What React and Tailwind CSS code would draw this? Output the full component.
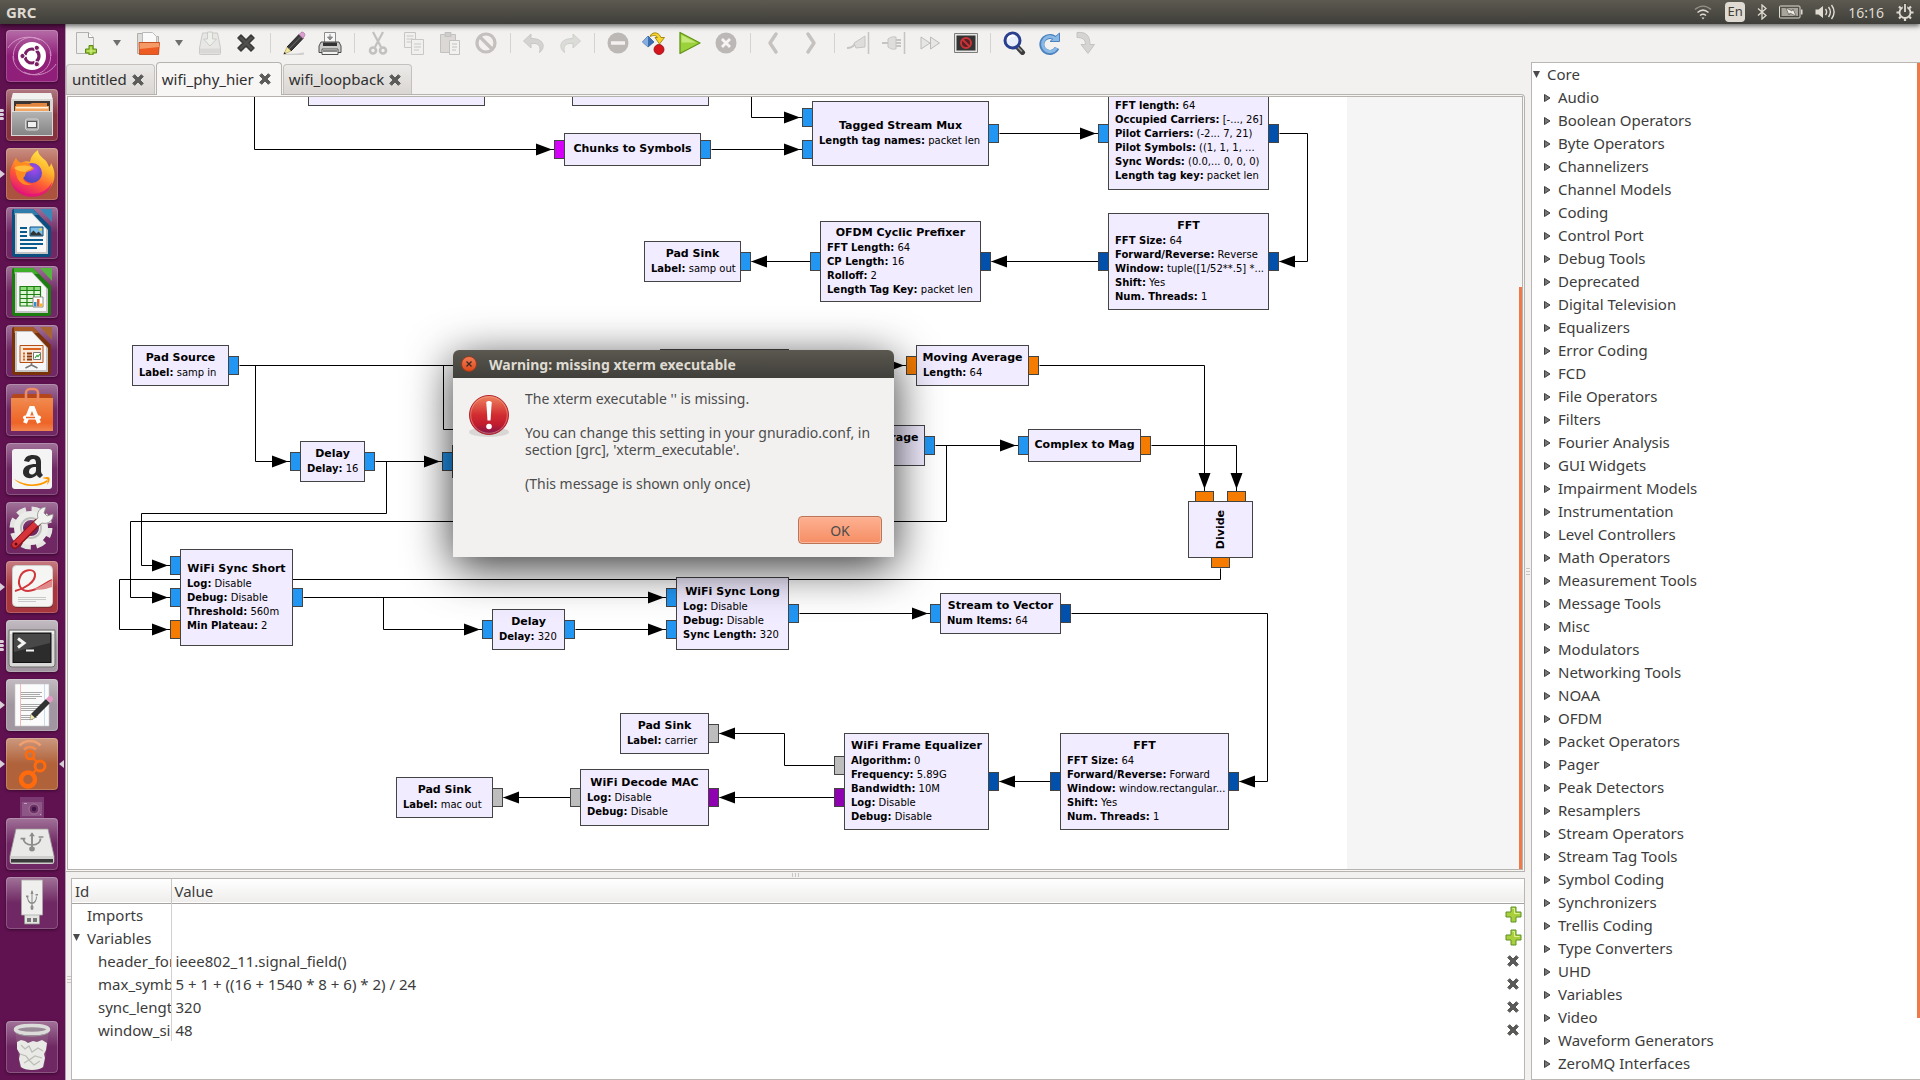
import React from "react";

const CATEGORIES = [
  "Audio",
  "Boolean Operators",
  "Byte Operators",
  "Channelizers",
  "Channel Models",
  "Coding",
  "Control Port",
  "Debug Tools",
  "Deprecated",
  "Digital Television",
  "Equalizers",
  "Error Coding",
  "FCD",
  "File Operators",
  "Filters",
  "Fourier Analysis",
  "GUI Widgets",
  "Impairment Models",
  "Instrumentation",
  "Level Controllers",
  "Math Operators",
  "Measurement Tools",
  "Message Tools",
  "Misc",
  "Modulators",
  "Networking Tools",
  "NOAA",
  "OFDM",
  "Packet Operators",
  "Pager",
  "Peak Detectors",
  "Resamplers",
  "Stream Operators",
  "Stream Tag Tools",
  "Symbol Coding",
  "Synchronizers",
  "Trellis Coding",
  "Type Converters",
  "UHD",
  "Variables",
  "Video",
  "Waveform Generators",
  "ZeroMQ Interfaces",
];

const VARIABLES = [
  { id: "Imports", value: "", kind: "group" },
  { id: "Variables", value: "", kind: "group", open: true },
  { id: "header_formatter", value: "ieee802_11.signal_field()" },
  { id: "max_symbols", value: "5 + 1 + ((16 + 1540 * 8 + 6) * 2) / 24" },
  { id: "sync_length", value: "320" },
  { id: "window_size", value: "48" },
];

const PORT = {
  complex: "bg-[#2196f3]",
  vector: "bg-[#0050ac]",
  float: "bg-[#f57c00]",
  byte: "bg-[#d500f9]",
  bytes: "bg-[#8e00b0]",
  message: "bg-[#bdbdbd]",
};

// box: x, y, width, height on the flow graph surface
const BLOCKS = [
  { box: [308, 73, 177, 33] },
  { box: [572, 73, 137, 33] },
  { box: [564, 133, 137, 33], title: "Chunks to Symbols" },
  { box: [812, 101, 177, 65], title: "Tagged Stream Mux", params: [["Length tag names", "packet len"]] },
  {
    box: [1108, 91, 161, 99],
    params: [
      ["FFT length", "64"],
      ["Occupied Carriers", "[-..., 26]"],
      ["Pilot Carriers", "(-2... 7, 21)"],
      ["Pilot Symbols", "((1, 1, 1, ..."],
      ["Sync Words", "(0.0,... 0, 0, 0)"],
      ["Length tag key", "packet len"],
    ],
  },
  {
    box: [1108, 213, 161, 97],
    title: "FFT",
    params: [
      ["FFT Size", "64"],
      ["Forward/Reverse", "Reverse"],
      ["Window", "tuple([1/52**.5] *..."],
      ["Shift", "Yes"],
      ["Num. Threads", "1"],
    ],
  },
  {
    box: [820, 221, 161, 81],
    title: "OFDM Cyclic Prefixer",
    params: [
      ["FFT Length", "64"],
      ["CP Length", "16"],
      ["Rolloff", "2"],
      ["Length Tag Key", "packet len"],
    ],
  },
  { box: [644, 241, 97, 41], title: "Pad Sink", params: [["Label", "samp out"]] },
  { box: [132, 345, 97, 41], title: "Pad Source", params: [["Label", "samp in"]] },
  { box: [300, 441, 65, 41], title: "Delay", params: [["Delay", "16"]] },
  { box: [452, 445, 81, 33] },
  { box: [660, 349, 129, 33] },
  { box: [916, 345, 113, 41], title: "Moving Average", params: [["Length", "64"]] },
  { box: [812, 425, 113, 41], title: "Moving Average", params: [[]] },
  { box: [1028, 429, 113, 33], title: "Complex to Mag" },
  { box: [1188, 501, 65, 57], title: "Divide", vertical: true },
  {
    box: [180, 549, 113, 97],
    title: "WiFi Sync Short",
    params: [
      ["Log", "Disable"],
      ["Debug", "Disable"],
      ["Threshold", "560m"],
      ["Min Plateau", "2"],
    ],
  },
  { box: [492, 609, 73, 41], title: "Delay", params: [["Delay", "320"]] },
  {
    box: [676, 577, 113, 73],
    title: "WiFi Sync Long",
    params: [
      ["Log", "Disable"],
      ["Debug", "Disable"],
      ["Sync Length", "320"],
    ],
  },
  { box: [940, 593, 121, 41], title: "Stream to Vector", params: [["Num Items", "64"]] },
  { box: [620, 713, 89, 41], title: "Pad Sink", params: [["Label", "carrier"]] },
  {
    box: [580, 769, 129, 57],
    title: "WiFi Decode MAC",
    params: [
      ["Log", "Disable"],
      ["Debug", "Disable"],
    ],
  },
  { box: [396, 777, 97, 41], title: "Pad Sink", params: [["Label", "mac out"]] },
  {
    box: [844, 733, 145, 97],
    title: "WiFi Frame Equalizer",
    params: [
      ["Algorithm", "0"],
      ["Frequency", "5.89G"],
      ["Bandwidth", "10M"],
      ["Log", "Disable"],
      ["Debug", "Disable"],
    ],
  },
  {
    box: [1060, 733, 169, 97],
    title: "FFT",
    params: [
      ["FFT Size", "64"],
      ["Forward/Reverse", "Forward"],
      ["Window", "window.rectangular..."],
      ["Shift", "Yes"],
      ["Num. Threads", "1"],
    ],
  },
];

const PORTS = [
  [554, 140, "byte"],
  [700, 140, "complex"],
  [802, 108, "complex"],
  [802, 140, "complex"],
  [988, 124, "complex"],
  [1098, 124, "complex"],
  [1268, 124, "vector"],
  [1098, 252, "vector"],
  [1268, 252, "vector"],
  [810, 252, "complex"],
  [980, 252, "vector"],
  [740, 252, "complex"],
  [228, 356, "complex"],
  [290, 452, "complex"],
  [364, 452, "complex"],
  [442, 452, "complex"],
  [906, 356, "float"],
  [1028, 356, "float"],
  [924, 436, "complex"],
  [1018, 436, "complex"],
  [1140, 436, "float"],
  [170, 556, "complex"],
  [170, 588, "complex"],
  [170, 620, "float"],
  [292, 588, "complex"],
  [482, 620, "complex"],
  [564, 620, "complex"],
  [666, 588, "complex"],
  [666, 620, "complex"],
  [788, 604, "complex"],
  [930, 604, "complex"],
  [1060, 604, "vector"],
  [708, 724, "message"],
  [570, 788, "message"],
  [708, 788, "bytes"],
  [492, 788, "message"],
  [834, 756, "message"],
  [834, 788, "bytes"],
  [988, 772, "vector"],
  [1050, 772, "vector"],
  [1228, 772, "vector"],
];

const TURNED_PORTS = [
  [1195, 491],
  [1227, 491],
  [1211, 557],
];

const WIRES = [
  [[254, 60], [254, 149], [554, 149]],
  [[751, 60], [751, 117], [802, 117]],
  [[711, 149], [802, 149]],
  [[999, 133], [1098, 133]],
  [[1279, 133], [1307, 133], [1307, 261], [1279, 261]],
  [[1098, 261], [991, 261]],
  [[810, 261], [751, 261]],
  [[239, 365], [906, 365]],
  [[255, 365], [255, 461], [290, 461]],
  [[443, 365], [443, 429], [560, 429]],
  [[375, 461], [442, 461]],
  [[386, 461], [386, 513], [141, 513], [141, 565], [170, 565]],
  [[935, 445], [1018, 445]],
  [[946, 445], [946, 521], [130, 521], [130, 597], [170, 597]],
  [[1039, 365], [1204, 365], [1204, 491]],
  [[1151, 445], [1236, 445], [1236, 491]],
  [[1220, 568], [1220, 579], [119, 579], [119, 629], [170, 629]],
  [[303, 597], [666, 597]],
  [[383, 597], [383, 629], [482, 629]],
  [[575, 629], [666, 629]],
  [[799, 613], [930, 613]],
  [[1071, 613], [1267, 613], [1267, 781], [1239, 781]],
  [[1050, 781], [999, 781]],
  [[834, 765], [784, 765], [784, 733], [719, 733]],
  [[834, 797], [719, 797]],
  [[570, 797], [503, 797]],
];

function arrowPoints(wire) {
  const [px, py] = wire[wire.length - 2];
  const [ex, ey] = wire[wire.length - 1];
  const dx = Math.sign(ex - px);
  const dy = Math.sign(ey - py);
  const gap = dx < 0 ? 0 : 2;
  const x = ex + (dy ? 0.5 : 0) - dx * gap;
  const y = ey + (dx ? 0.5 : 0) - dy * gap;
  const bx = x - dx * 16;
  const by = y - dy * 16;
  return `${x},${y} ${bx - dy * 6},${by - dx * 6} ${bx + dy * 6},${by + dx * 6}`;
}

function Wires() {
  return (
    <svg className="absolute left-0 top-0" width="1347" height="900" fill="none">
      {WIRES.map((wire, i) => (
        <g key={i}>
          <polyline points={wire.map(([x, y]) => `${x + 0.5},${y + 0.5}`).join(" ")} stroke="#000" />
          <polygon points={arrowPoints(wire)} fill="#000" />
        </g>
      ))}
    </svg>
  );
}

function Block({ box, title, params = [], vertical }) {
  const [left, top, width, height] = box;
  return (
    <div
      className="absolute flex flex-col justify-center border border-[#444] bg-[#f1ecff] px-1.5 font-['DejaVu_Sans'] text-black"
      style={{ left, top, width, height }}
    >
      {title && (
        <div
          className={
            vertical
              ? "rotate-180 self-center text-[11px] leading-[13px] font-bold whitespace-nowrap [writing-mode:vertical-rl]"
              : "self-center pb-0.5 text-[11px] leading-[13px] font-bold whitespace-nowrap"
          }
        >
          {title}
        </div>
      )}
      {params.map(([name, value], i) => (
        <div key={i} className="min-h-[14px] text-[10px] leading-[14px] whitespace-nowrap">
          {name && (
            <>
              <b>{name}:</b> {value}
            </>
          )}
        </div>
      ))}
    </div>
  );
}

/* ---------- launcher ---------- */

function UbuntuIcon() {
  return (
    <svg viewBox="0 0 52 52" className="size-full">
      <g fill="none" stroke="#e9b9dc" strokeWidth="1" opacity=".7">
        <path d="M8 30A18 18 0 0 1 30 8c9 2 15 9 15 18" />
        <path d="M2 18C8 8 22 4 34 10M50 34c-6 10-20 14-32 8M44 22a18 18 0 0 1-22 22C13 42 7 35 7 26" />
      </g>
      <circle cx="26" cy="26" r="14" fill="#fff" />
      <circle cx="26" cy="26" r="7" fill="none" stroke="#7a1f66" strokeWidth="3.2" strokeDasharray="13 1.7" strokeDashoffset="-8" />
      <g fill="#7a1f66" stroke="#fff" strokeWidth="1">
        <circle cx="16.5" cy="26" r="2.6" />
        <circle cx="30.8" cy="17.8" r="2.6" />
        <circle cx="30.8" cy="34.2" r="2.6" />
      </g>
    </svg>
  );
}

function FilesIcon() {
  return (
    <svg viewBox="0 0 52 52" className="size-full">
      <defs>
        <linearGradient id="cab" x1="0" y1="0" x2="0" y2="1">
          <stop offset="0" stopColor="#b5b5b5" />
          <stop offset="1" stopColor="#858585" />
        </linearGradient>
      </defs>
      <path d="M7 4h38l2 7v36H5V11z" fill="#d7d7d5" />
      <path d="M7 4h38l1.5 6h-41z" fill="#f1f1ef" />
      <path d="M8 12h36v10H8z" fill="#3b3634" />
      <path d="M10 15h14l2-1h15v8H10z" fill="#e08640" />
      <path d="M9 17h34v6H9z" fill="#f3a55f" />
      <path d="M10 18h32v1.500H10z" fill="#fff3e2" />
      <path d="M6 22h40v24H6z" fill="url(#cab)" />
      <path d="M6 22h40v1H6z" fill="#dedede" />
      <rect x="19.500" y="30" width="13" height="11" rx="2" fill="#a5a5a5" stroke="#d5d5d5" />
      <rect x="21.500" y="32.500" width="9" height="6" fill="#f1f1f1" stroke="#5a5a5a" />
    </svg>
  );
}

function FirefoxIcon() {
  return (
    <svg viewBox="0 0 52 52" className="size-full">
      <defs>
        <linearGradient id="fx" x1=".8" y1="0" x2=".3" y2="1">
          <stop offset="0" stopColor="#fff04f" />
          <stop offset=".35" stopColor="#ffb52e" />
          <stop offset=".65" stopColor="#ff5a36" />
          <stop offset="1" stopColor="#e3117b" />
        </linearGradient>
        <radialGradient id="fxg" cx=".6" cy=".3" r=".8">
          <stop offset="0" stopColor="#a44bf0" />
          <stop offset="1" stopColor="#3f46b8" />
        </radialGradient>
      </defs>
      <path
        d="M10 10c1 3 3 4 5 5 3-2 7-2 9-1 1-6 4-9 8-12 0 5 4 7 7 10 2 2 3 4 4 7 1-1 2-2 2-4 4 7 5 15 1 22-4 7-11 11-19 11C14 48 4 39 4 26c0-6 3-11 6-16z"
        fill="url(#fx)"
      />
      <path d="M5 33c4 9 12 13 21 13s16-4 20-12c-1 9-10 15-20 15S6 43 5 33z" fill="#e3117b" opacity=".75" />
      <circle cx="26" cy="25" r="10" fill="url(#fxg)" />
      <path d="M10 10c1 3 3 4 5 5 5-2 8 0 10 3l3 2c-1 3-6 3-8 5-1 2-1 4-3 5 1 4 5 6 9 6-6 3-13-1-15-7-2-6-3-12-1-19z" fill="#ff8a1f" />
      <path d="M8 20c5-3 11-3 18-1 1 2-5 3-7 5-3 0-7-1-11-4z" fill="#ffbd3d" />
    </svg>
  );
}

function OfficePage({ dark, mid, light, children }) {
  return (
    <svg viewBox="0 0 52 52" className="size-full">
      <path d="M8 2h19l18 18v27a3 3 0 0 1-3 3H9a3 3 0 0 1-3-3V4a2 2 0 0 1 2-2z" fill={dark} />
      <path d="M8 2h19l6 6H8z" fill={light} />
      <path d="M34 2h12v13z" fill={mid} />
      <path d="M9 6h17l16 17v24H9z" fill="#c4c4c4" />
      <path d="M11 7h15l14 15v23H11z" fill="#f7f7f7" />
      {children}
    </svg>
  );
}

function WriterIcon() {
  return (
    <OfficePage dark="#0b4f80" mid="#3b88b8" light="#2f7cad">
      <path d="M14 22h7M14 26h7M14 30h7M14 34h23M14 38h23M14 42h17" stroke="#0b5a8e" strokeWidth="2" transform="translate(0 -1)" />
      <path d="M24 20h13v9H24z" fill="#7fc0ea" stroke="#0b4f80" />
      <path d="M24.500 28.500v-2l3-3 3 3 2-2 4 4z" fill="#333" />
      <circle cx="34.500" cy="22.500" r="1.300" fill="#f5d03b" />
    </OfficePage>
  );
}

function CalcIcon() {
  return (
    <OfficePage dark="#1c7d0f" mid="#56b540" light="#3fae28">
      <path d="M14 20h21v20H14z" fill="#dff5d8" />
      <path d="M14 20h21v4H14z" fill="#8fdc7c" />
      <path d="M14 20.500h20.500v19.500H14zM14 24.500h21M14 28.500h21M14 32.500h21M14 36.500h21M21 20v20M28 20v20" stroke="#1e7f12" strokeWidth="1.200" fill="none" />
      <path d="M27 31h10v10H27z" fill="#fff" stroke="#8a8a8a" />
      <path d="M28 36h2.500v4.500H28z" fill="#2a8fd8" />
      <path d="M31 33h2.500v7.500H31z" fill="#e0642a" />
      <path d="M34 37.500h2.500v3H34z" fill="#f0b92a" />
    </OfficePage>
  );
}

function ImpressIcon() {
  return (
    <OfficePage dark="#7a3208" mid="#a86534" light="#a75a26">
      <path d="M14 20.500h23v17H14z" fill="#fbe9dc" stroke="#b34f14" />
      <path d="M17 24h18" stroke="#d9651f" strokeWidth="2" />
      <path d="M17 28.500h2M17 31.500h2M17 34.500h2" stroke="#d9651f" strokeWidth="2" />
      <path d="M21 28.500h5M21 31.500h5M21 34.500h5" stroke="#8a3b0e" strokeWidth="2" />
      <path d="M27.500 27.500h7v7h-7z" fill="#fff" stroke="#777" />
      <path d="M29 33l2-2.500 1 1L34 29" stroke="#39a339" strokeWidth="1.200" fill="none" />
      <path d="M25.500 38v2l-6 3M25.500 40l6 3" stroke="#777" strokeWidth="1.600" fill="none" />
    </OfficePage>
  );
}

function SoftwareIcon() {
  return (
    <svg viewBox="0 0 52 52" className="size-full">
      <defs>
        <linearGradient id="bag" x1="0" y1="0" x2="0" y2="1">
          <stop offset="0" stopColor="#f08a4e" />
          <stop offset=".75" stopColor="#ee6426" />
          <stop offset="1" stopColor="#f08550" />
        </linearGradient>
      </defs>
      <path d="M7 10h38l2 5H5z" fill="#b5451a" />
      <path d="M5 14h42v33H5z" fill="url(#bag)" />
      <path d="M20 18V9a4 4 0 0 1 4-4h4a4 4 0 0 1 4 4v9" fill="none" stroke="#ec8a62" strokeWidth="2.600" />
      <path d="M19 39l6-15h2l6 15" fill="none" stroke="#fff" strokeWidth="4" />
      <rect x="17" y="31.500" width="18" height="4" rx="2" fill="#fff" />
      <path d="M20 33.500h9" stroke="#ee6426" strokeWidth="1.500" />
    </svg>
  );
}

function AmazonIcon() {
  return (
    <svg viewBox="0 0 52 52" className="size-full">
      <rect x="6" y="6" width="40" height="40" rx="3" fill="#f4f4f4" />
      <path
        d="M18 18c1-4 4-6 9-6 6 0 8 3 8 7v9c0 2 1 3 2 4l-3 3c-2-1-3-2-3-3-5 5-14 4-14-3 0-6 6-8 13-8 0-4-1-5-3-5s-3 1-4 3z"
        fill="#2b2b2b"
      />
      <path d="M30 24c-5 0-7 2-7 5 0 4 7 3 7-2z" fill="#f4f4f4" />
      <path d="M8 36c11 7 24 7 33 1l1 1.500C33 45 17 45 8 36z" fill="#f90" />
      <path d="M36.500 35c3-1 6-1.500 7 0 .5 2-.5 5-2.500 7 .5-2 1-4 .5-5.500-1.500-.8-3-.8-5-1.500z" fill="#f90" />
    </svg>
  );
}

function SettingsIcon() {
  return (
    <svg viewBox="0 0 52 52" className="size-full">
      <circle cx="25" cy="26" r="18.500" fill="none" stroke="#e4e4e2" strokeWidth="6" strokeDasharray="9 5.530" />
      <circle cx="25" cy="26" r="12.500" fill="none" stroke="#ececea" strokeWidth="9" />
      <circle cx="25" cy="26" r="10" fill="none" stroke="#bfbfbd" strokeWidth="2" />
      <path d="M9 43L31 21" stroke="#8d1219" strokeWidth="8" strokeLinecap="round" />
      <path d="M9 42.500L31 20.500" stroke="#d6343a" strokeWidth="5.500" strokeLinecap="round" />
      <path d="M28 20l4-4c-2-5 2-11 8-11l-2 6 3 3 6-2c1 6-5 11-11 9l-4 3z" fill="#f2f2f0" stroke="#8c8c8a" strokeWidth=".8" />
      <circle cx="10" cy="42" r="1.500" fill="#5d0c10" />
    </svg>
  );
}

function ReaderIcon() {
  return (
    <svg viewBox="0 0 52 52" className="size-full">
      <rect x="7" y="5" width="40" height="42" rx="4" fill="#5b2a2c" opacity=".6" />
      <rect x="6.500" y="4.500" width="40" height="41" rx="4" fill="#f5f5f3" stroke="#cfcfcd" />
      <path
        d="M9 30c9-2 21-9 20-17-1-6-12-5-15 3-3 8 1 14 8 14 9 0 15-7 24-11"
        fill="none"
        stroke="#d0363c"
        strokeWidth="2"
      />
      <path d="M28 28c6-2 12-6 18-9v7c-6 2-12 4-18 2z" fill="#e08a8c" />
      <path d="M12 36.500h28M12 38.500h28M12 40.500h18" stroke="#c9c9c7" />
    </svg>
  );
}

function TerminalIcon() {
  return (
    <svg viewBox="0 0 52 52" className="size-full">
      <path d="M3 10h46v34a3 3 0 0 1-3 3H6a3 3 0 0 1-3-3z" fill="#d9d9d7" stroke="#6f6f6d" />
      <path d="M4 11h44v3H4z" fill="#f2f2f0" />
      <rect x="7" y="13" width="38" height="29.500" fill="#2c2c2c" stroke="#111" />
      <path d="M8 14h36v9L8 32z" fill="#484848" />
      <path d="M12 18.500l6 4.500-6 4.500" stroke="#f4f4f2" strokeWidth="3" fill="none" />
      <path d="M20 30.500h8" stroke="#f4f4f2" strokeWidth="2" />
    </svg>
  );
}

function EditorIcon() {
  return (
    <svg viewBox="0 0 52 52" className="size-full">
      <path d="M9 5h34v42H9z" fill="#fbfbfb" stroke="#c7c7c7" strokeWidth=".6" />
      <path d="M14.500 5v42" stroke="#f0a9a9" strokeWidth=".8" />
      <path d="M38.500 5v42" stroke="#b9d3ee" strokeWidth=".8" />
      <path d="M15 13.500h21M15 15.500h19M15 17.500h21M15 19.500h15M15 25.500h21M15 27.500h21M15 29.500h20M15 31.500h21M15 36.500h17M15 38.500h16M15 40.500h12" stroke="#a8a8a8" />
      <path d="M25 35l15-15 4 4-15 15z" fill="#333" />
      <path d="M40 20l3-3c2-1 5 2 4 4l-3 3z" fill="#e79ac6" />
      <path d="M25 35l4 4-5 2z" fill="#f6eba0" stroke="#777" strokeWidth=".5" />
    </svg>
  );
}

function GrcIcon() {
  return (
    <svg viewBox="0 0 52 52" className="size-full" fill="none" stroke="#ff6a0c">
      <circle cx="22" cy="41.500" r="7" strokeWidth="4.500" />
      <circle cx="34" cy="28" r="5" strokeWidth="3" />
      <circle cx="24" cy="17" r="4" strokeWidth="2.600" />
      <path d="M26 36l4-4M27 20l4 4" strokeWidth="2" />
      <path d="M18 11.500a8.500 8.500 0 0 1 12 0" strokeWidth="2.600" stroke="#f28c50" />
      <path d="M13.500 7.500a14.500 14.500 0 0 1 21 0" strokeWidth="2.600" stroke="#f0a070" />
    </svg>
  );
}

function CameraIcon() {
  return (
    <svg viewBox="0 0 24 21" className="size-full">
      <path d="M0 0h24v21H0z" fill="#7c3a72" />
      <path d="M2 5h20v14H2z" fill="#8d5686" />
      <circle cx="14" cy="12" r="5" fill="#6d3263" stroke="#a479a0" />
      <circle cx="14" cy="12" r="2.200" fill="#3f1347" />
      <path d="M4 6h3v1H4zM20 17h1v1h-1z" fill="#c79cc2" />
    </svg>
  );
}

function UsbGlyph({ transform }) {
  return (
    <g transform={transform} fill="none" stroke="#8b8b89" strokeWidth="2">
      <path d="M0-9V9M0 5c-6 0-9-4-9-8M0 5c6 0 9-4 9-8" />
      <path d="M-3-6h6L0-11z" fill="#8b8b89" stroke="none" />
      <circle cx="0" cy="10" r="2" fill="#8b8b89" />
      <path d="M-12-3h5M7-5h5" />
    </g>
  );
}

function DriveIcon() {
  return (
    <svg viewBox="0 0 52 52" className="size-full">
      <path d="M10 11h32l6 27v6H4v-6z" fill="#e9e9e7" stroke="#9a9a98" strokeWidth=".8" />
      <path d="M4 38h44v6a2 2 0 0 1-2 2H6a2 2 0 0 1-2-2z" fill="#cfcfcd" />
      <path d="M5 41h42v3.500H5z" fill="#3a3a3a" />
      <UsbGlyph transform="translate(26 23) scale(.95 .8)" />
    </svg>
  );
}

function StickIcon() {
  return (
    <svg viewBox="0 0 52 52" className="size-full">
      <path d="M18.500 37h15v10h-15z" fill="#e4e4e2" stroke="#8d8d8b" strokeWidth=".8" />
      <path d="M21 41h4v4h-4zM27 41h4v4h-4z" fill="#777" />
      <path d="M15.500 3h21v35h-21z" fill="#efefed" stroke="#a9a9a7" strokeWidth=".8" />
      <UsbGlyph transform="translate(26 22) scale(.5 .85)" />
    </svg>
  );
}

function TrashIcon() {
  return (
    <svg viewBox="0 0 52 52" className="size-full">
      <path d="M9 9l5 37c3 3 21 3 24 0l5-37z" fill="#8f6488" opacity=".5" />
      <path
        d="M11 21l4-2 4 1 3 2 5-2 4 1 5-2 5 3-1 7-2 4 1 4-2 9c-4 4-18 4-22 0l-2-8 1-5-3-5z"
        fill="#e9e9e5"
      />
      <path d="M15 24l4 4 4-3 3 6 6-4 5 3M14 33l6 2 3 4 6-4 7 2M18 42l5-3 5 5 6-4" stroke="#bdbdb8" fill="none" strokeWidth="1.300" />
      <ellipse cx="26" cy="8.500" rx="16.500" ry="4" fill="#9a8a98" stroke="#dcdcda" strokeWidth="3.500" />
      <path d="M10 12c6 4 26 4 32 0" stroke="#9c9c9a" fill="none" />
    </svg>
  );
}

const GLASS = "bg-[#6f2863]";

const LAUNCHER = [
  { name: "Search", Icon: UbuntuIcon, tile: "bg-[#8f1f79]" },
  { name: "Files", Icon: FilesIcon, tile: "bg-[#86323f]", windows: 3 },
  { name: "Firefox", Icon: FirefoxIcon, tile: "bg-[#ac5340]", windows: 1 },
  { name: "Writer", Icon: WriterIcon, tile: GLASS },
  { name: "Calc", Icon: CalcIcon, tile: GLASS },
  { name: "Impress", Icon: ImpressIcon, tile: GLASS },
  { name: "Software", Icon: SoftwareIcon, tile: GLASS },
  { name: "Amazon", Icon: AmazonIcon, tile: GLASS },
  { name: "Settings", Icon: SettingsIcon, tile: GLASS },
  { name: "Document viewer", Icon: ReaderIcon, tile: "bg-[#a8363e]", windows: 1 },
  { name: "Terminal", Icon: TerminalIcon, tile: "bg-[#a297a0]", windows: 3 },
  { name: "Text editor", Icon: EditorIcon, tile: "bg-[#a297a0]", windows: 1 },
  { name: "GRC", Icon: GrcIcon, tile: "bg-[#b0623a]", windows: 1, focused: true },
  { name: "Camera", Icon: CameraIcon, mini: true },
  { name: "Drive", Icon: DriveIcon, tile: GLASS },
  { name: "USB stick", Icon: StickIcon, tile: GLASS },
];

function LauncherItem({ name, Icon, tile, windows, focused }) {
  return (
    <div className="relative mb-[7px] flex w-full pl-1.5">
      {windows === 3 && (
        <span className="absolute left-0 top-5 flex flex-col gap-px">
          <i className="h-[3px] w-1 rounded-r bg-[#d9cfd7]" />
          <i className="h-[3px] w-1 rounded-r bg-[#d9cfd7]" />
          <i className="h-[3px] w-1 rounded-r bg-[#d9cfd7]" />
        </span>
      )}
      {windows === 1 && (
        <svg className="absolute left-0 top-[22px]" width="5" height="8">
          <path d="M0 0l5 4-5 4z" fill="#d9cfd7" />
        </svg>
      )}
      {focused && (
        <svg className="absolute right-px top-[22px]" width="5" height="8">
          <path d="M5 0L0 4l5 4z" fill="#d9cfd7" />
        </svg>
      )}
      <button
        aria-label={name}
        className={`${tile} relative size-[52px] overflow-hidden rounded shadow-[0_1px_3px_rgba(0,0,0,0.4)]`}
      >
        <span className="absolute inset-0 bg-linear-to-b from-white/35 to-transparent to-50%" />
        <span className="absolute inset-0">
          <Icon />
        </span>
        <span className="absolute inset-0 rounded border border-white/20" />
      </button>
    </div>
  );
}

function Launcher() {
  return (
    <nav className="flex w-[66px] shrink-0 flex-col border-r border-[#b3a0b0] bg-[#601150] pt-1.5">
      {LAUNCHER.map((item) =>
        item.mini ? (
          <button key={item.name} aria-label={item.name} className="ml-5 h-[21px] w-6">
            <item.Icon />
          </button>
        ) : (
          <LauncherItem key={item.name} {...item} />
        )
      )}
      <div className="grow" />
      <LauncherItem name="Trash" Icon={TrashIcon} tile={GLASS} />
    </nav>
  );
}

/* ---------- top panel ---------- */

function TopPanel() {
  return (
    <header className="relative z-20 flex h-6 shrink-0 items-center bg-linear-to-b from-[#5c5a50] to-[#3f3e39] px-1.5 text-[#dfdbd2] shadow-[0_2px_5px_rgba(0,0,0,0.6)]">
      <span className="text-[15px] font-bold">GRC</span>
      <div className="ml-auto flex items-center gap-3">
        <svg width="20" height="16" viewBox="0 0 20 16" fill="none" stroke="#dfdbd2" strokeWidth="1.500">
          <path d="M2 5.500c5-4.500 11-4.500 16 0" opacity=".45" />
          <path d="M4.500 8.500c3.500-3 7.500-3 11 0M7 11.500c2-1.600 4-1.600 6 0" />
          <path d="M8.500 13.500h3L10 15.500z" fill="#dfdbd2" stroke="none" />
        </svg>
        <span className="flex h-5 w-5 items-center justify-center rounded-sm bg-[#dfdbd2] text-[13px] text-[#3f3e39]">
          En
        </span>
        <svg width="10" height="16" viewBox="1 0 10 16" fill="none" stroke="#dfdbd2" strokeWidth="1.300">
          <path d="M2 4.500l8 7L6 15V1l4 3.500-8 7" />
        </svg>
        <svg width="24" height="14" viewBox="0 0 24 14">
          <rect x=".5" y="1" width="20.500" height="12" rx="1" fill="none" stroke="#dfdbd2" />
          <path d="M22 4.500h1.500v5H22z" fill="#dfdbd2" />
          <path d="M2.500 3h16.500v8H2.500z" fill="#a8a59c" />
          <path d="M7 3l6 3 1-2 3 7-6-3-1 2z" fill="#f3efe8" stroke="#4a4943" strokeWidth=".6" />
        </svg>
        <svg width="21" height="16" viewBox="0 0 21 16" fill="none" stroke="#dfdbd2" strokeWidth="1.400">
          <path d="M.5 5.500h3L8 2v12L3.500 10.500h-3z" fill="#dfdbd2" stroke="none" />
          <path d="M10.500 5c1.500 2 1.500 4 0 6M13.500 3c2.500 3.300 2.500 6.700 0 10M16.500 1c3.500 4.700 3.500 9.300 0 14" />
        </svg>
        <span className="text-[14px]">16:16</span>
        <svg width="18" height="18" viewBox="0 0 18 18" fill="none" stroke="#dfdbd2">
          <circle cx="9" cy="9.500" r="5.500" strokeWidth="1.800" />
          <path d="M15 9.500h2.500M.5 9.500H3M4.700 5.200L3 3.500M13.300 5.200L15 3.500M4.700 13.800L3 15.500M13.300 13.800l1.700 1.700M9 15.500V18" strokeWidth="2.200" />
          <path d="M9 0v9" stroke="#4a4943" strokeWidth="4.500" />
          <path d="M9 1v8" strokeWidth="1.800" />
        </svg>
      </div>
    </header>
  );
}

/* ---------- toolbar ---------- */

const CROSS = "M4 1L1 4l5 5-5 5 3 3 5-5 5 5 3-3-5-5 5-5-3-3-5 5z";

function Cross({ size, color = "#4d4d4b" }) {
  return (
    <svg width={size} height={size} viewBox="0 0 18 18">
      <path d={CROSS} fill={color} stroke={color} strokeWidth="1.500" strokeLinejoin="round" />
    </svg>
  );
}

const ICONS = {
  New: (
    <>
      <path d="M2.500 1.500h12l5 5v16h-17z" fill="#efefed" stroke="#b3b3b1" />
      <path d="M14.500 1.500v5h5" fill="#fff" stroke="#a0a09e" />
      <path d="M15 14.500h4v3.500h3.500v4H19v2h-4v-2h-3.500v-4H15z" fill="#9acb34" stroke="#5c8a14" strokeWidth="1" />
      <path d="M17 16v7M13 20h8.500" stroke="#d9f08b" strokeWidth="1" />
    </>
  ),
  Open: (
    <>
      <path d="M1.500 2.500h7l2 3h12v17h-21z" fill="#dedcd9" stroke="#b0aeab" />
      <path d="M6.500 1.500h10l4 4v6h-14z" fill="#fafafa" stroke="#bbb" />
      <path d="M3 11.500h20.500l-1 12H3.500z" fill="#ed5b22" stroke="#c0440f" strokeWidth=".8" />
      <path d="M3.500 12h19.500v4l-19.300 2z" fill="#f59a66" />
    </>
  ),
  Save: (
    <g opacity=".45">
      <path d="M4.500 2h15l3 15v5.500a1 1 0 0 1-1 1h-19a1 1 0 0 1-1-1V17z" fill="#dcdcda" stroke="#9c9c9a" />
      <path d="M2 17.500h20v5H2z" fill="#bcbcba" />
      <path d="M9.500 1h5v7h4L12 15 5.500 8h4z" fill="#e8f0e4" stroke="#9aa096" />
    </g>
  ),
  Close: <path transform="translate(3 3)" d={CROSS} fill="#50504e" stroke="#3a3a38" strokeLinejoin="round" strokeWidth="1.500" />,
  Edit: (
    <>
      <path d="M3 23.500c6 .8 12 .3 19-1" stroke="#cfcecc" strokeWidth="2" fill="none" />
      <path d="M5 16L17 3.500l4 4L9 20z" fill="#3a3a3a" stroke="#222" />
      <path d="M7 18L19 5.500" stroke="#6d6d6d" />
      <path d="M17 3.500L19 1.500c2-1.500 5 1.500 3.500 3.500L21 7.500z" fill="#dc9fd0" stroke="#a0689a" strokeWidth=".6" />
      <path d="M5 16l4 4-7 3z" fill="#f3e59a" stroke="#a09450" strokeWidth=".6" />
      <path d="M1.500 23.500l1-2.500 1.500 1.500z" fill="#222" />
    </>
  ),
  Print: (
    <>
      <path d="M6.500 1.500h11v11h-11z" fill="#f7f7f7" stroke="#8d8d8b" />
      <path d="M12 3v5M9.500 6L12 9l2.500-3z" stroke="#888" fill="#888" />
      <path d="M3 11h18l2 4v6.500H1V15z" fill="#cbcbc9" stroke="#4c4c4a" />
      <path d="M5 11.500h14V15H5z" fill="#333" />
      <path d="M4 18h16v5.500H4z" fill="#f2f2f0" stroke="#555" />
      <path d="M5 20h14" stroke="#222" />
    </>
  ),
  Cut: (
    <g opacity=".45" fill="none" stroke="#8a8886">
      <path d="M7 1l8 15M17 1L9 16" strokeWidth="2.200" />
      <circle cx="7" cy="19.500" r="3" strokeWidth="2.600" />
      <circle cx="17" cy="19.500" r="3" strokeWidth="2.600" />
    </g>
  ),
  Copy: (
    <g opacity=".4" fill="#f0f0ee" stroke="#8a8a88">
      <path d="M2.500 1.500h11v15h-11z" />
      <path d="M4.500 5h7M4.500 8h7M4.500 11h5" />
      <path d="M9.500 8.500h12v15h-12z" />
      <path d="M12 13h7M12 16h7M12 19h5" />
    </g>
  ),
  Paste: (
    <g opacity=".4" stroke="#7c7c7a">
      <path d="M2.500 3.500h15v18h-15z" fill="#b9b5b0" />
      <path d="M7 1.500h6v4H7z" fill="#999" />
      <path d="M11.500 9.500h10v14h-10z" fill="#f2f2f0" />
      <path d="M14 13h5M14 16h5M14 19h4" />
    </g>
  ),
  Delete: (
    <g opacity=".45" fill="none" stroke="#8b8583" strokeWidth="3.200">
      <circle cx="12" cy="12" r="9" />
      <path d="M6 6l12 12" />
    </g>
  ),
  Undo: <path opacity=".4" d="M9 3L1.500 10 9 17v-4.500c6-.5 9 1 9 6 0 1-.3 2-.5 3 5-3 7-14-8.500-14z" fill="#a9a7a4" stroke="#8b8987" />,
  Redo: <path opacity=".4" d="M15 3l7.500 7-7.500 7v-4.500c-6-.5-9 1-9 6 0 1 .3 2 .5 3-5-3-7-14 8.500-14z" fill="#b9bbb5" stroke="#999b95" />,
  Errors: (
    <>
      <circle cx="12" cy="12" r="10.500" fill="#bcb8b6" />
      <path d="M5 12h14" stroke="#f2f1f0" strokeWidth="3.500" />
    </>
  ),
  Generate: (
    <>
      <path d="M6 5l6 6-6 5-5.500-5z" fill="#3a6fb4" stroke="#234d86" strokeWidth=".7" />
      <path d="M6 5v11l-5.500-5z" fill="#88aee0" />
      <path d="M8 5.500c1-4 8-6 11 1h3.500L17.500 13 13 6.500h2.500c-1.500-2.500-4-2.500-7.500-1z" fill="#f5d42c" stroke="#9c7f0a" strokeWidth=".9" />
      <circle cx="17" cy="18.500" r="5" fill="#d6141c" stroke="#8e0b10" strokeWidth=".8" />
    </>
  ),
  Execute: (
    <>
      <path d="M2 1.500L22 12 2 22.500z" fill="#9bd13a" stroke="#63951a" strokeWidth="1.300" strokeLinejoin="round" />
      <path d="M3.500 4L18 11.500H3.500z" fill="#c4e97a" />
    </>
  ),
  Kill: (
    <>
      <circle cx="12" cy="12" r="10.500" fill="#bcb8b6" />
      <path d="M8 8l8 8M16 8l-8 8" stroke="#f6f5f4" strokeWidth="2.800" />
    </>
  ),
  Back: <path d="M14 3L8 12l6 9" fill="none" stroke="#c6c2bf" strokeWidth="3.500" strokeLinecap="round" strokeLinejoin="round" />,
  Forward: <path d="M10 3l6 9-6 9" fill="none" stroke="#c6c2bf" strokeWidth="3.500" strokeLinecap="round" strokeLinejoin="round" />,
  Enable: (
    <g opacity=".45" stroke="#918f8c" fill="#c9c7c4">
      <path d="M1 17c4 0 6-1 8-4" fill="none" strokeWidth="2" />
      <path d="M8 12l11-7v11l-9 1z" />
      <path d="M22.500 1v22" strokeWidth="1.500" />
    </g>
  ),
  Disable: (
    <g opacity=".45" stroke="#918f8c" fill="#c9c7c4">
      <path d="M0 12h7" strokeWidth="2" />
      <path d="M6 8c4-3 6-2 8-2v12c-2 0-4 1-8-2z" />
      <path d="M14 9h5M14 12h5M14 15h5" strokeWidth="2" />
      <path d="M22.500 1v22" strokeWidth="1.500" />
    </g>
  ),
  Bypass: <path d="M3 6l9 6-9 6zM12.500 6l9 6-9 6z" fill="#e6e6e4" stroke="#bdbbb9" strokeLinejoin="round" />,
  Console: (
    <>
      <path d="M.5 2.500h23v19H.5z" fill="#e6e6e4" stroke="#7d7d7b" />
      <path d="M2.500 4.500h19v15h-19z" fill="#333" />
      <circle cx="12" cy="12" r="5" fill="#5a2022" stroke="#c93338" strokeWidth="2" />
      <path d="M8.500 8.500l7 7" stroke="#c93338" strokeWidth="2" />
    </>
  ),
  Find: (
    <>
      <path d="M14.500 15l6 6.500" stroke="#3c3c3c" strokeWidth="5" strokeLinecap="round" />
      <path d="M15 15.500l5 5" stroke="#9a9a98" strokeWidth="1.500" />
      <circle cx="10.500" cy="9.500" r="7.500" fill="#e8eefa" stroke="#2b3f8f" strokeWidth="3" />
      <path d="M6 8c1-3 4-4 7-3" stroke="#fff" strokeWidth="2" fill="none" />
    </>
  ),
  Reload: (
    <>
      <path d="M18.500 9A8 8 0 1 0 19 17" fill="none" stroke="#4c83bd" strokeWidth="5" />
      <path d="M12 10.500h9.500V2z" fill="#8ab8e6" stroke="#4c83bd" />
      <path d="M18 8.500A7.500 7.500 0 1 0 18.500 17" fill="none" stroke="#8ab8e6" strokeWidth="3" />
    </>
  ),
  Hier: <path opacity=".45" d="M3 1.500c9-1 13 3 13 12h4.500L14 22.500 7 13.500h4.500c0-5-3-7-8.500-7z" fill="#b5b3b0" stroke="#8f8d8a" />,
};

const TOOLS = [
  ["New", "menu", "Open", "menu", "Save", "Close"],
  ["Edit", "Print"],
  ["Cut", "Copy", "Paste", "Delete"],
  ["Undo", "Redo"],
  ["Errors", "Generate", "Execute", "Kill"],
  ["Back", "Forward"],
  ["Enable", "Disable", "Bypass", "Console"],
  ["Find", "Reload", "Hier"],
];

function Toolbar() {
  return (
    <div className="flex h-[38px] shrink-0 items-center pl-0.5" role="toolbar">
      {TOOLS.map((group, g) => (
        <React.Fragment key={g}>
          {g > 0 && (
            <span className="flex w-3 justify-center">
              <i className="h-5 w-px bg-[#d5d3d0]" />
            </span>
          )}
          {group.map((tool, i) =>
            tool === "menu" ? (
              <button key={i} aria-label="More" className="flex w-[26px] justify-center">
                <svg width="8" height="6">
                  <path d="M0 0h8L4 6z" fill="#6f6f6d" />
                </svg>
              </button>
            ) : (
              <button key={tool} aria-label={tool} className="flex w-9 justify-center">
                <svg width="24" height="24" viewBox="0 0 24 24">
                  {ICONS[tool]}
                </svg>
              </button>
            )
          )}
        </React.Fragment>
      ))}
    </div>
  );
}

/* ---------- notebook ---------- */

function Tab({ label, active }) {
  return (
    <div
      className={
        active
          ? "relative z-10 -mb-px flex h-[33px] items-center gap-1 rounded-t border border-b-0 border-[#b6b3af] bg-[#f7f6f5] pr-[9px] pl-[5px]"
          : "flex h-[30px] items-center gap-1 rounded-t border border-b-0 border-[#c4c1bd] bg-linear-to-b from-[#eceae8] to-[#d9d6d3] pr-[9px] pl-[5px]"
      }
    >
      <button role="tab" aria-selected={!!active} className="text-[15px] text-[#2f2f2f]">
        {label}
      </button>
      <button aria-label={"Close " + label} className="flex w-3.5 justify-center">
        <Cross size={12} color="#5c5c5a" />
      </button>
    </div>
  );
}

function FlowGraph() {
  return (
    <div className="relative grow overflow-hidden bg-[#f5f5f5]">
      <div className="absolute -top-[97px] -left-[68px] h-[980px] w-[1347px] bg-white">
        <Wires />
        {PORTS.map(([left, top, type]) => (
          <i
            key={left + "-" + top}
            className={`${PORT[type]} absolute h-[19px] w-[11px] border border-[#444]`}
            style={{ left, top }}
          />
        ))}
        {TURNED_PORTS.map(([left, top]) => (
          <i
            key={left + "-" + top}
            className="absolute h-[11px] w-[19px] border border-[#444] bg-[#f57c00]"
            style={{ left, top }}
          />
        ))}
        {BLOCKS.map((block, i) => (
          <Block key={i} {...block} />
        ))}
      </div>
      <div className="absolute top-[190px] right-0 bottom-0 w-[3px] bg-[#ee7a4b]" />
    </div>
  );
}

function GripDots({ vertical }) {
  return (
    <span className={vertical ? "flex flex-col gap-0.5" : "flex gap-0.5"}>
      {[0, 1, 2].map((n) => (
        <i key={n} className={vertical ? "h-px w-1 bg-[#c9c6c3]" : "h-1 w-px bg-[#c9c6c3]"} />
      ))}
    </span>
  );
}

function AddIcon() {
  return (
    <svg width="17" height="17" viewBox="0 0 17 17">
      <path d="M6 1h5v5h5v5h-5v5H6v-5H1V6h5z" fill="#a9cf3c" stroke="#5f9126" />
      <path d="M7.500 2.500h2v5h5" stroke="#ddf09a" fill="none" />
    </svg>
  );
}

function VariableEditor() {
  return (
    <div className="h-full grow overflow-hidden border border-[#b9b6b3] bg-white">
      <table className="w-full table-fixed border-collapse text-left text-[15px] text-[#3c3c3c]">
        <colgroup>
          <col className="w-[99px]" />
          <col />
          <col className="w-[22px]" />
        </colgroup>
        <thead>
          <tr className="h-6 border-b border-[#a5a29f] bg-linear-to-b from-white to-[#efeeec] leading-5">
            <th className="border-r border-[#c9c6c3] pl-[3px] font-normal">Id</th>
            <th className="pl-[3px] font-normal">Value</th>
            <th />
          </tr>
        </thead>
        <tbody>
          {VARIABLES.map((row) => (
            <tr key={row.id} className="h-[23px] leading-[22px]">
              <td className="overflow-hidden border-r border-[#d3d1ce] whitespace-nowrap">
                {row.kind ? (
                  <span className="flex items-center">
                    <svg className="mx-px mr-[7px]" width="7" height="7">
                      {row.open && <path d="M0 0h7L3.500 7z" fill="#4a4a4a" />}
                    </svg>
                    {row.id}
                  </span>
                ) : (
                  <span className="pl-[26px]">{row.id}</span>
                )}
              </td>
              <td className="pl-1">{row.value}</td>
              <td>
                <button aria-label={row.kind ? "Add" : "Remove"} className="flex h-[22px] w-[22px] items-center justify-center">
                  {row.kind ? <AddIcon /> : <Cross size={12} color="#5a5a58" />}
                </button>
              </td>
            </tr>
          ))}
        </tbody>
      </table>
    </div>
  );
}

function BlockTree() {
  return (
    <aside className="relative w-[389px] shrink-0 overflow-hidden border-t border-b border-l border-[#b9b6b3] bg-white text-[15px] text-[#3c3c3c]">
      <button className="flex h-[23px] items-center gap-[7px] pl-px">
        <svg width="7" height="7">
          <path d="M0 0h7L3.500 7z" fill="#4a4a4a" />
        </svg>
        Core
      </button>
      <ul>
        {CATEGORIES.map((name) => (
          <li key={name}>
            <button className="flex h-[23px] items-center gap-2 pl-3 whitespace-nowrap">
              <svg width="6" height="8">
                <path d="M.5.5L6 4 .5 7.500z" fill="#777" stroke="#3f3f3f" />
              </svg>
              {name}
            </button>
          </li>
        ))}
      </ul>
      <div className="absolute top-0 right-0 h-[94%] w-[3px] bg-[#ee7a4b]" />
    </aside>
  );
}

function WarningDialog() {
  return (
    <div
      role="dialog"
      aria-label="Warning: missing xterm executable"
      className="absolute top-[326px] left-[387px] w-[441px] rounded-t-md bg-[#f2f1f0] text-[#4c4c4c] shadow-[0_10px_46px_rgba(0,0,0,0.8)]"
    >
      <div className="flex h-7 items-center gap-3 rounded-t-md bg-linear-to-b from-[#5a584f] to-[#403f3a] pl-2">
        <button
          aria-label="Close"
          className="flex size-4 items-center justify-center rounded-full border border-[#9c3b1c] bg-linear-to-b from-[#f37b54] to-[#dd4814]"
        >
          <svg width="6" height="6" stroke="#3c2a22" strokeWidth="1.300">
            <path d="M.5.5l5 5M5.500.5l-5 5" />
          </svg>
        </button>
        <h2 className="text-[14px] font-bold text-[#dfdbd2]">Warning: missing xterm executable</h2>
      </div>
      <div className="flex gap-[15px] pt-4 pl-[13px]">
        <svg className="shrink-0" width="44" height="44" viewBox="0 0 44 44">
          <defs>
            <linearGradient id="err" x1="0" y1="0" x2="0" y2="1">
              <stop offset="0" stopColor="#ef8460" />
              <stop offset=".5" stopColor="#d22c31" />
              <stop offset=".75" stopColor="#c01c2e" />
              <stop offset="1" stopColor="#7c1450" />
            </linearGradient>
          </defs>
          <ellipse cx="23" cy="38" rx="20" ry="5" fill="#d9d7d5" />
          <circle cx="23" cy="21" r="19.500" fill="url(#err)" stroke="#b3242c" />
          <circle cx="23" cy="21" r="18.300" fill="none" stroke="#f0a08a" opacity=".6" />
          <path d="M20.300 8.500c.3-2 5.100-2 5.400 0L24.500 26.500h-3z" fill="#fff" />
          <circle cx="23" cy="32.500" r="2.800" fill="#fff" />
        </svg>
        <p className="-mt-1 text-[14px] leading-[17px] whitespace-pre">
          {"The xterm executable '' is missing.\n\nYou can change this setting in your gnuradio.conf, in\nsection [grc], 'xterm_executable'.\n\n(This message is shown only once)"}
        </p>
      </div>
      <div className="flex justify-end px-3 pt-6 pb-[13px]">
        <button className="h-7 w-[84px] rounded border border-[#bd7454] bg-linear-to-b from-[#fdb091] to-[#f58e64] text-[14px] shadow-[inset_0_0_0_1px_#fbb79b]">
          OK
        </button>
      </div>
    </div>
  );
}

export default function App() {
  return (
    <div className="flex h-screen flex-col overflow-hidden bg-[#f2f1f0] font-['Noto_Sans',sans-serif]">
      <TopPanel />
      <div className="flex min-h-0 grow">
        <Launcher />
        <main className="relative flex min-w-0 grow flex-col">
          <Toolbar />
          <div className="flex min-h-0 grow">
            <div className="flex min-w-0 grow flex-col">
              <div className="flex h-8 shrink-0 items-end gap-px" role="tablist">
                <Tab label="untitled" />
                <Tab label="wifi_phy_hier" active />
                <Tab label="wifi_loopback" />
              </div>
              <div className="flex min-h-0 grow rounded-tr border-t border-r border-b border-[#b6b3af] bg-[#f7f6f5] p-px">
                <div className="flex grow border border-[#b6b3af]">
                  <FlowGraph />
                </div>
              </div>
              <div className="flex h-1.5 shrink-0 items-center justify-center">
                <GripDots />
              </div>
              <div className="flex h-[202px] shrink-0">
                <div className="flex w-[5px] shrink-0 items-center justify-center">
                  <GripDots vertical />
                </div>
                <VariableEditor />
              </div>
            </div>
            <div className="flex w-1.5 shrink-0 items-center justify-center">
              <GripDots vertical />
            </div>
            <BlockTree />
          </div>
          <WarningDialog />
        </main>
      </div>
    </div>
  );
}
